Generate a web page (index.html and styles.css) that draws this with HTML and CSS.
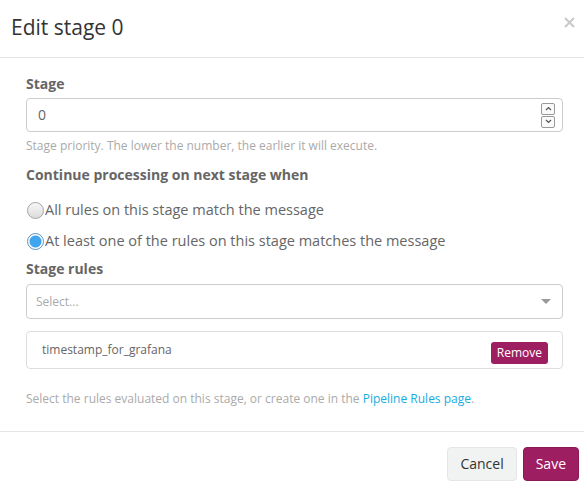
FILE: index.html
```html
<!DOCTYPE html>
<html>
<head>
<meta charset="utf-8">
<link rel="stylesheet" href="styles.css">
</head>
<body>
<div class="modal">
  <div class="modal-header">
    <h4 class="modal-title">Edit stage 0</h4>
    <span class="close" aria-label="Close">
      <svg width="11" height="11" viewBox="0 0 11 11"><path d="M1 1L10 10M10 1L1 10" stroke="#c8c8c8" stroke-width="2"/></svg>
    </span>
  </div>
  <div class="modal-body">
    <div class="form-group stage-group">
      <label class="control-label">Stage</label>
      <div class="input-number">
        <span class="input-value">0</span>
        <span class="spinner">
          <span class="spin-btn"><svg width="7" height="5" viewBox="0 0 7 5"><path d="M1 4L3.5 1.5L6 4" fill="none" stroke="#555" stroke-width="1.2"/></svg></span>
          <span class="spin-btn"><svg width="7" height="5" viewBox="0 0 7 5"><path d="M1 1L3.5 3.5L6 1" fill="none" stroke="#555" stroke-width="1.2"/></svg></span>
        </span>
      </div>
      <p class="help-block">Stage priority. The lower the number, the earlier it will execute.</p>
    </div>
    <div class="form-group continue-group">
      <label class="control-label">Continue processing on next stage when</label>
      <div class="radio radio-first"><span class="radio-circle"></span><span>All rules on this stage match the message</span></div>
      <div class="radio"><span class="radio-circle checked"></span><span>At least one of the rules on this stage matches the message</span></div>
    </div>
    <div class="form-group rules-group">
      <label class="control-label">Stage rules</label>
      <div class="select-box">
        <span class="placeholder">Select...</span>
        <span class="caret"></span>
      </div>
      <div class="rule-item">
        <span class="rule-name">timestamp_for_grafana</span>
        <span class="btn-remove">Remove</span>
      </div>
      <p class="help-block rules-help">Select the rules evaluated on this stage, or create one in the <a class="link" href="#">Pipeline Rules page</a>.</p>
    </div>
  </div>
  <div class="modal-footer">
    <button class="btn btn-default">Cancel</button>
    <button class="btn btn-primary">Save</button>
  </div>
</div>
</body>
</html>
```

FILE: styles.css
```css
* { box-sizing: border-box; }
html, body {
  margin: 0;
  padding: 0;
  background: #fff;
}
body {
  font-family: "Open Sans", "DejaVu Sans", sans-serif;
  font-size: 14px;
  color: #666;
  width: 584px;
  height: 487px;
  overflow: hidden;
}
.modal {
  width: 584px;
}
.modal-header {
  height: 58px;
  border-bottom: 1px solid #e5e5e5;
  display: flex;
  justify-content: space-between;
  align-items: flex-start;
  padding: 15px 9px 0 11px;
}
.modal-title {
  margin: 0;
  font-size: 21px;
  line-height: 24px;
  font-weight: 400;
  color: #333;
}
.close {
  display: block;
  margin-top: 2px;
  line-height: 0;
}
.modal-body {
  padding: 16px 21px 0 26px;
}
.control-label {
  display: block;
  font-weight: 700;
  line-height: 20px;
  margin-bottom: 4px;
  color: #666;
}
.input-number {
  height: 34px;
  border: 1px solid #ccc;
  border-radius: 4px;
  display: flex;
  align-items: center;
  justify-content: space-between;
  padding: 0 7px 0 11px;
  color: #666;
}
.input-value {
  line-height: 20px;
}
.spinner {
  display: flex;
  flex-direction: column;
  gap: 1px;
}
.spin-btn {
  width: 14px;
  height: 12px;
  border: 1px solid #999;
  border-radius: 2px;
  display: flex;
  align-items: center;
  justify-content: center;
  background: #fafafa;
}
.help-block {
  margin: 5px 0 0;
  font-size: 12px;
  line-height: 17px;
  color: #aaa;
}
.stage-group {
  margin-bottom: 11px;
}
.continue-group .control-label {
  margin-bottom: 0;
}
.radio {
  display: flex;
  align-items: center;
  height: 20px;
  line-height: 20px;
  margin-top: 11px;
  font-size: 14.5px;
  color: #666;
}
.radio-first {
  margin-top: 15px;
}
.radio-circle {
  width: 17px;
  height: 17px;
  border-radius: 50%;
  border: 1px solid #a5a5a5;
  background: linear-gradient(#f7f7f7, #dcdcdc);
  flex: none;
  margin-left: 1px;
  margin-right: 1px;
}
.radio-circle.checked {
  border: 1px solid #5d8fb9;
  background: radial-gradient(circle, #3ea5ee 0, #3ea5ee 5.5px, #ffffff 6.5px, #ffffff 8px);
}
.rules-group {
  margin-top: 8px;
}
.rules-group .control-label {
  margin-bottom: 5px;
}
.select-box {
  height: 35px;
  border: 1px solid #ccc;
  border-radius: 4px;
  display: flex;
  align-items: center;
  justify-content: space-between;
  padding: 0 11px 0 9px;
}
.placeholder {
  font-size: 12px;
  color: #aaa;
}
.caret {
  width: 0;
  height: 0;
  border-left: 5px solid transparent;
  border-right: 5px solid transparent;
  border-top: 5px solid #999;
}
.rule-item {
  margin-top: 12px;
  height: 38px;
  border: 1px solid #ddd;
  border-radius: 4px;
  display: flex;
  align-items: center;
  justify-content: space-between;
  padding: 0 14px 0 15px;
}
.rule-name {
  font-size: 12px;
  color: #666;
  position: relative;
  top: -1px;
}
.btn-remove {
  background: #9e1e62;
  color: #fff;
  font-size: 12px;
  line-height: 20px;
  height: 22px;
  padding: 1px 6px;
  border-radius: 3px;
  margin-top: 5px;
}
.rules-help {
  margin-top: 21px;
}
.link {
  color: #16ace3;
  text-decoration: none;
}
.modal-footer {
  margin-top: 24px;
  border-top: 1px solid #e5e5e5;
  padding: 15px 5px 0 0;
  display: flex;
  justify-content: flex-end;
  gap: 6px;
}
.btn {
  font-family: "Open Sans", "DejaVu Sans", sans-serif;
  font-size: 14px;
  line-height: 20px;
  height: 34px;
  padding: 6px 12px;
  border-radius: 4px;
  cursor: pointer;
}
.btn-default {
  background: #f1f2f2;
  border: 1px solid #e6e6e6;
  color: #333;
}
.btn-primary {
  background: #9e1e62;
  border: 1px solid #8a1a56;
  color: #fff;
}
```
